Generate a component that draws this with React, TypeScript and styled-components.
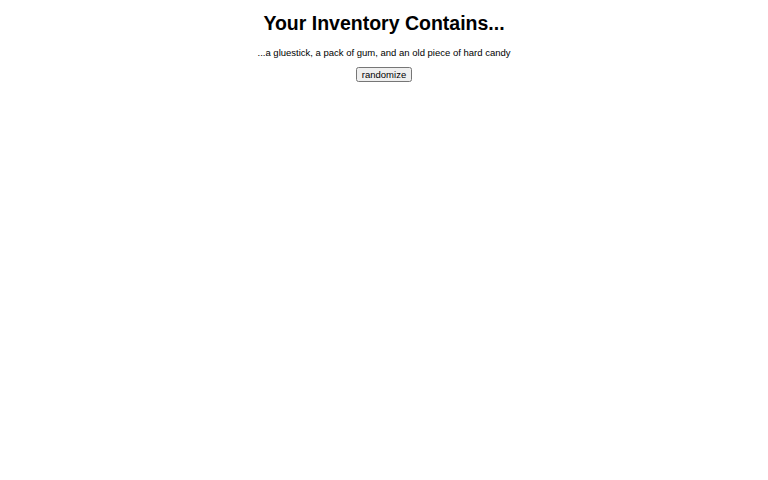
import React from "react";
import styled, { createGlobalStyle } from "styled-components";

const Global = createGlobalStyle`
  body { margin: 8px; font-family: "Liberation Sans", Arial, sans-serif; background: #fff; color: #000; }
`;

const Wrap = styled.div`
  display: flex;
  flex-direction: column;
  align-items: center;
  text-align: center;
`;

const Title = styled.h1`
  font-size: 19.5px;
  font-weight: bold;
  margin: 4px 0 0;
  line-height: 22px;
`;

const Items = styled.p`
  font-size: 9.5px;
  margin: 13px 0 0;
  line-height: 11px;
`;

const Button = styled.button`
  font-family: "Liberation Sans", Arial, sans-serif;
  font-size: 9.5px;
  line-height: 12px;
  height: 15px;
  box-sizing: border-box;
  margin-top: 9px;
  padding: 0 4px;
`;

export default function App() {
  return (
    <>
      <Global />
      <Wrap>
        <Title>Your Inventory Contains...</Title>
        <Items>...a gluestick, a pack of gum, and an old piece of hard candy</Items>
        <Button>randomize</Button>
      </Wrap>
    </>
  );
}
